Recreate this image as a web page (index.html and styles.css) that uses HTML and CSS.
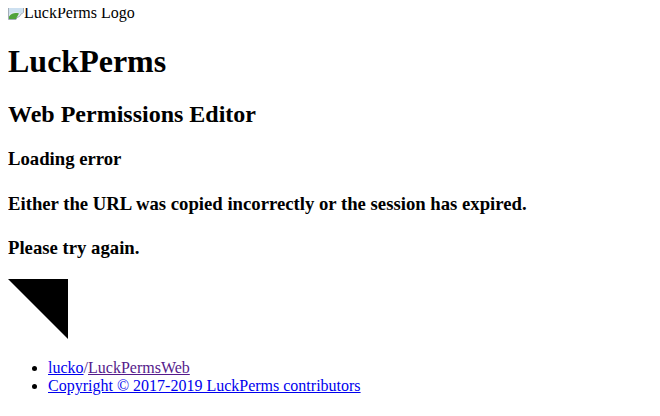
FILE: index.html
```html
<!DOCTYPE html>
<html lang="en">
<head>
<meta charset="utf-8">
<title>LuckPerms Web Permissions Editor</title>
<link rel="stylesheet" href="styles.css">
</head>
<body>
<div class="logo"><svg class="broken" width="16" height="16" viewBox="0 0 16 16"><path d="M0.5 0.5H15.5V8.5L13 10 11.5 12.5 9 13.5 8 15.5H0.5Z" fill="#dfe9f3" stroke="#a3adb8"/><path d="M1 12.5C4 9 7 8.5 11 9.5L9 13 8 15H1Z" fill="#4fa33a"/><path d="M1 1H15V8L13 9.5C10 7.5 5 7 1 10Z" fill="#cde0f0"/></svg><span class="alt">LuckPerms Logo</span></div>
<h1>LuckPerms</h1>
<h2>Web Permissions Editor</h2>
<h3 class="msg">Loading error</h3>
<h3 class="msg">Either the URL was copied incorrectly or the session has expired.</h3>
<h3 class="msg last">Please try again.</h3>
<svg class="spinner" width="60" height="60" viewBox="0 0 60 60"><polygon points="0,0 60,0 60,60"/></svg>
<ul>
<li><a href="#lucko" class="link">lucko</a><span class="sep">/</span><a href="#web" class="link visited">LuckPermsWeb</a></li>
<li><a href="#contributors" class="link">Copyright © 2017-2019 LuckPerms contributors</a></li>
</ul>
</body>
</html>
```
FILE: styles.css
```css
body {
  margin: 8px;
  font-family: "Liberation Serif", "Times New Roman", serif;
  font-size: 16px;
  color: #000;
  background: #fff;
}
.logo {
  display: flex;
  align-items: center;
  height: 18px;
  margin-top: -4.5px;
}
.broken {
  display: block;
  align-self: flex-start;
  margin-top: 0.5px;
}
.alt {
  line-height: 18px;
}
.msg {
  margin-bottom: 22.5px;
}
.msg.last {
  margin-bottom: 20px;
}
.spinner {
  display: inline-block;
}
.link {
  color: #0000ee;
  text-decoration: underline;
}
.visited {
  color: #551a8b;
}
.sep {
  color: #551a8b;
}
```
